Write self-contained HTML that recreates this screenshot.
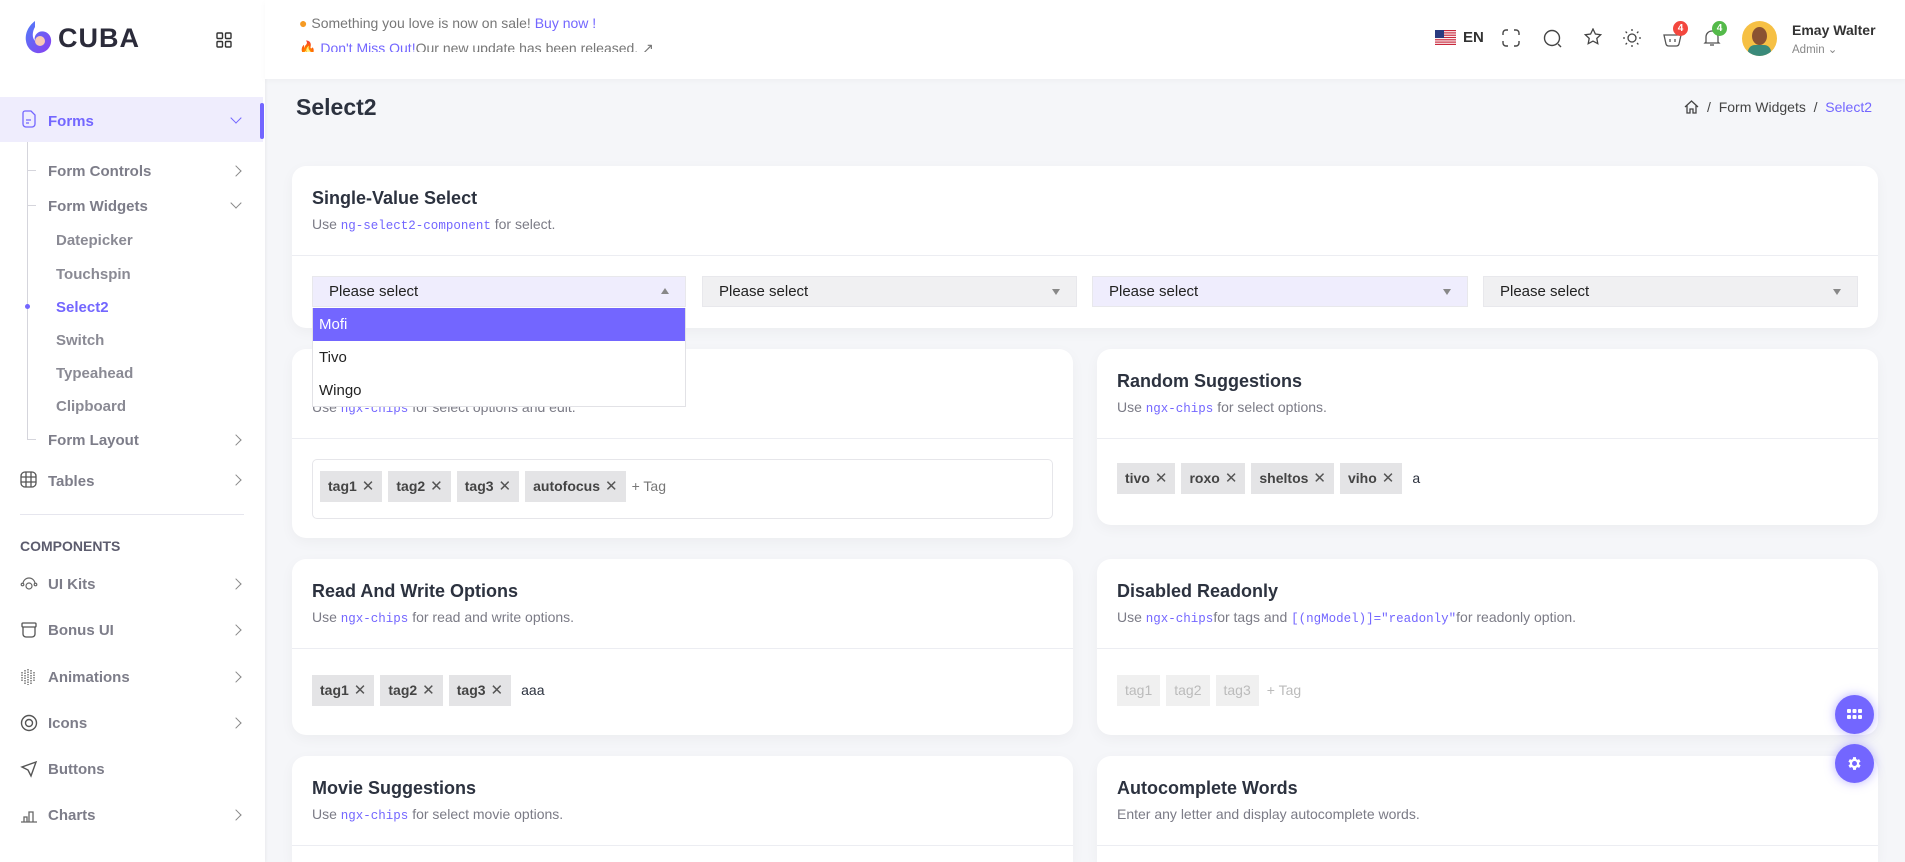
<!DOCTYPE html>
<html style="overflow:hidden;width:1905px;height:862px"><head><meta charset="utf-8"><style>
*{box-sizing:border-box;margin:0;padding:0}
body{width:1905px;height:862px;overflow:hidden;background:#f5f6f9;font-family:"Liberation Sans",sans-serif;position:relative;color:#2c323f}
.abs{position:absolute}
#side{left:0;top:0;width:265px;height:862px;background:#fff;box-shadow:1px 0 3px rgba(0,0,0,.05)}
#head{left:265px;top:0;width:1640px;height:79px;background:#fff;box-shadow:0 2px 6px rgba(0,0,0,.03)}
.nav{position:absolute;left:48px;font-size:15px;font-weight:bold;color:#7d7d89}
.sub{position:absolute;left:56px;font-size:15px;font-weight:bold;color:#8a8a94}
.chev{position:absolute;left:232px;width:8px;height:8px;border-right:1.6px solid #888;border-bottom:1.6px solid #888}
.r{transform:rotate(-45deg)}.d{transform:rotate(45deg)}
.ic{position:absolute;left:20px}
.card{position:absolute;background:#fff;border-radius:14px;box-shadow:0 4px 14px rgba(0,0,0,.04);overflow:hidden}
.card h5{position:absolute;left:20px;top:22px;font-size:18px;font-weight:bold;color:#2c323f}
.card p{position:absolute;left:20px;top:50px;font-size:14px;color:#7b7b86;white-space:nowrap}
code{font-family:"Liberation Mono",monospace;font-size:12.5px;color:#7366ff}
.hr{position:absolute;left:0;right:0;height:1px;background:#ecedf2}
.sel{position:absolute;top:276px;height:31px;background:#f0f0f2;border:1px solid #e8e8ec;font-size:15px;padding:6px 16px;color:#222}
.sel i{position:absolute;right:16px;top:12px;border:4.5px solid transparent;border-top:6px solid #888;border-bottom:0}
.tag{display:inline-block;background:#e4e4e6;height:31px;line-height:31px;padding:0 8px;font-size:14px;font-weight:bold;color:#444;margin-right:6px;vertical-align:top}
.tag b{font-weight:normal;color:#555;margin-left:5px;font-size:15px}
.tags{position:absolute;left:20px}
.dis .tag{color:#bbb;background:#f0f0f0;font-weight:normal}
</style></head><body>
<div id="side" class="abs">
 <svg class="abs" style="left:23px;top:19px" width="30" height="36" viewBox="0 0 30 36"><defs><linearGradient id="g" x1="0" y1="0" x2="1" y2="1"><stop offset="0" stop-color="#4f7df9"/><stop offset="1" stop-color="#8a3ff0"/></linearGradient></defs><path d="M12 2C4 8 2 16 3 22c1 8 8 13 14 12 8-1 12-8 11-14-1-6-7-9-12-7-4 2-5 6-4 9-3-3-3-9 0-14z" fill="url(#g)"/><circle cx="17" cy="22" r="5" fill="#f9c9b6"/></svg>
 <div class="abs" style="left:58px;top:23px;font-size:27px;font-weight:bold;color:#2b2b3a;letter-spacing:1px">CUBA</div>
 <svg class="abs" style="left:216px;top:32px" width="16" height="16" viewBox="0 0 16 16" fill="none" stroke="#333" stroke-width="1.4"><rect x="1" y="1" width="5.5" height="5.5" rx="1"/><rect x="9.5" y="1" width="5.5" height="5.5" rx="1"/><rect x="1" y="9.5" width="5.5" height="5.5" rx="1"/><rect x="9.5" y="9.5" width="5.5" height="5.5" rx="1"/></svg>
 <div class="abs" style="left:0;top:97px;width:263px;height:45px;background:#efedfd"></div>
 <div class="abs" style="left:260px;top:103px;width:4px;height:36px;background:#7366ff;border-radius:2px"></div>
 <svg class="ic" style="top:110px" width="18" height="18" viewBox="0 0 18 18" fill="none" stroke="#7366ff" stroke-width="1.3"><path d="M3 3a2 2 0 0 1 2-2h6l4 4v9a3 3 0 0 1-3 3H6a3 3 0 0 1-3-3z"/><path d="M6 10h5M6 13h3"/></svg>
 <div class="nav" style="top:113px;color:#7366ff">Forms</div>
 <div class="chev d" style="top:114px;border-color:#7366ff"></div>
 <div class="abs" style="left:27px;top:142px;width:1px;height:297px;background:#d5d5dc"></div>
 <div class="abs" style="left:27px;top:170px;width:9px;height:1px;background:#d5d5dc"></div>
 <div class="abs" style="left:27px;top:205px;width:9px;height:1px;background:#d5d5dc"></div>
 <div class="abs" style="left:27px;top:439px;width:9px;height:1px;background:#d5d5dc"></div>
 <div class="abs" style="left:25px;top:304px;width:5px;height:5px;border-radius:50%;background:#7366ff"></div>
 <div class="nav" style="top:163px">Form Controls</div><div class="chev r" style="top:167px"></div>
 <div class="nav" style="top:198px">Form Widgets</div><div class="chev d" style="top:199px"></div>
 <div class="sub" style="top:232px">Datepicker</div>
 <div class="sub" style="top:266px">Touchspin</div>
 <div class="sub" style="top:299px;color:#7366ff">Select2</div>
 <div class="sub" style="top:332px">Switch</div>
 <div class="sub" style="top:365px">Typeahead</div>
 <div class="sub" style="top:398px">Clipboard</div>
 <div class="nav" style="top:432px">Form Layout</div><div class="chev r" style="top:436px"></div>
 <svg class="ic" style="top:471px" width="18" height="18" viewBox="0 0 18 18" fill="none" stroke="#555" stroke-width="1.3"><rect x="1" y="1" width="15" height="15" rx="4"/><path d="M1 6h15M1 11h15M6 1v15M11 1v15"/></svg>
 <div class="nav" style="top:473px">Tables</div><div class="chev r" style="top:476px"></div>
 <div class="abs" style="left:20px;top:514px;width:224px;height:1px;background:#e6e6ee"></div>
 <div class="abs" style="left:20px;top:538px;font-size:14px;font-weight:bold;color:#5c5c6e">COMPONENTS</div>
 <svg class="ic" style="top:575px" width="18" height="18" viewBox="0 0 18 18" fill="none" stroke="#666" stroke-width="1.2"><path d="M3 9a6 6 0 0 1 12 0"/><circle cx="9" cy="11" r="3"/><circle cx="2.5" cy="9.5" r="1.3"/><circle cx="15.5" cy="9.5" r="1.3"/></svg>
 <div class="nav" style="top:576px">UI Kits</div><div class="chev r" style="top:580px"></div>
 <svg class="ic" style="top:621px" width="18" height="18" viewBox="0 0 18 18" fill="none" stroke="#555" stroke-width="1.3"><rect x="2" y="2" width="14" height="4" rx="1"/><path d="M3 6v7a3 3 0 0 0 3 3h6a3 3 0 0 0 3-3V6"/></svg>
 <div class="nav" style="top:622px">Bonus UI</div><div class="chev r" style="top:626px"></div>
 <svg class="ic" style="top:668px" width="18" height="18" viewBox="0 0 18 18" stroke="#777" stroke-width="1.5" stroke-dasharray="1.5 1"><path d="M2 4v10M5 2v14M8 1v16M11 2v14M14 4v10"/></svg>
 <div class="nav" style="top:669px">Animations</div><div class="chev r" style="top:673px"></div>
 <svg class="ic" style="top:714px" width="18" height="18" viewBox="0 0 18 18" fill="none" stroke="#555" stroke-width="1.4"><circle cx="9" cy="9" r="7.5"/><circle cx="9" cy="9" r="3.5"/></svg>
 <div class="nav" style="top:715px">Icons</div><div class="chev r" style="top:719px"></div>
 <svg class="ic" style="top:760px" width="18" height="18" viewBox="0 0 18 18" fill="none" stroke="#555" stroke-width="1.4"><path d="M16 2L2 7l6 3 3 6z"/></svg>
 <div class="nav" style="top:761px">Buttons</div>
 <svg class="ic" style="top:806px" width="18" height="18" viewBox="0 0 18 18" fill="none" stroke="#666" stroke-width="1.3"><path d="M1 16h16M4 16v-5h3v5M9 16V6h4v10"/></svg>
 <div class="nav" style="top:807px">Charts</div><div class="chev r" style="top:811px"></div>
</div>
<div id="head" class="abs">
 <div class="abs" style="left:34px;top:18px;width:460px;height:34px;overflow:hidden;font-size:14px;color:#777">
  <div style="position:absolute;top:-3px;left:0;white-space:nowrap"><span style="color:#f59a23">●</span> Something you love is now on sale! <span style="color:#7366ff">Buy now !</span></div>
  <div style="position:absolute;top:22px;left:0;white-space:nowrap"><span style="color:#f57a23">🔥</span> <span style="color:#7366ff">Don't Miss Out!</span>Our new update has been released. ↗</div>
 </div>
</div>
<svg class="abs" style="left:1435px;top:30px" width="21" height="15" viewBox="0 0 21 15"><rect width="21" height="15" fill="#fff"/><g fill="#c8283c"><rect y="0" width="21" height="1.2"/><rect y="2.3" width="21" height="1.2"/><rect y="4.6" width="21" height="1.2"/><rect y="6.9" width="21" height="1.2"/><rect y="9.2" width="21" height="1.2"/><rect y="11.5" width="21" height="1.2"/><rect y="13.8" width="21" height="1.2"/></g><rect width="9" height="8" fill="#2a3b80"/></svg>
<div class="abs" style="left:1463px;top:29px;font-size:15px;font-weight:bold;color:#333">EN</div>
<svg class="abs" style="left:1502px;top:29px" width="18" height="18" viewBox="0 0 18 18" fill="none" stroke="#444" stroke-width="1.4"><path d="M1 6V4a3 3 0 0 1 3-3h2M12 1h2a3 3 0 0 1 3 3v2M17 12v2a3 3 0 0 1-3 3h-2M6 17H4a3 3 0 0 1-3-3v-2"/></svg>
<svg class="abs" style="left:1543px;top:29px" width="20" height="20" viewBox="0 0 20 20" fill="none" stroke="#444" stroke-width="1.4"><circle cx="9" cy="9" r="7.5"/><path d="M15 15l3 3"/></svg>
<svg class="abs" style="left:1582px;top:28px" width="20" height="19" viewBox="0 0 20 19" fill="none" stroke="#444" stroke-width="1.3"><path d="M11 1l2.4 5 5.3.7-3.9 3.7 1 5.3-4.8-2.6-4.8 2.6 1-5.3L3.3 6.7 8.6 6z"/></svg>
<svg class="abs" style="left:1622px;top:28px" width="20" height="20" viewBox="0 0 20 20" fill="none" stroke="#444" stroke-width="1.3"><circle cx="10" cy="10" r="4"/><path d="M10 1v2M10 17v2M1 10h2M17 10h2M3.6 3.6l1.4 1.4M15 15l1.4 1.4M3.6 16.4L5 15M15 5l1.4-1.4"/></svg>
<svg class="abs" style="left:1663px;top:29px" width="19" height="18" viewBox="0 0 19 18" fill="none" stroke="#555" stroke-width="1.3"><path d="M1 6h17l-2 9a3 3 0 0 1-3 2H6a3 3 0 0 1-3-2z"/><path d="M7 10v3M12 10v3"/></svg>
<div class="abs" style="left:1673px;top:21px;width:15px;height:15px;border-radius:50%;background:#f3473e;color:#fff;font-size:10px;font-weight:bold;text-align:center;line-height:15px">4</div>
<svg class="abs" style="left:1703px;top:29px" width="18" height="18" viewBox="0 0 18 18" fill="none" stroke="#555" stroke-width="1.3"><path d="M3 13V8a6 6 0 0 1 12 0v5l1 1H2z"/><path d="M7 16h4"/></svg>
<div class="abs" style="left:1712px;top:21px;width:15px;height:15px;border-radius:50%;background:#54ba4a;color:#fff;font-size:10px;font-weight:bold;text-align:center;line-height:15px">4</div>
<div class="abs" style="left:1742px;top:21px;width:35px;height:35px;border-radius:50%;background:#f6c044;overflow:hidden"><div style="position:absolute;left:10px;top:6px;width:15px;height:18px;border-radius:50%;background:#8a5232"></div><div style="position:absolute;left:6px;top:24px;width:23px;height:14px;border-radius:8px;background:#3a8a7a"></div></div>
<div class="abs" style="left:1792px;top:22px;font-size:14px;font-weight:bold;color:#333">Emay Walter</div>
<div class="abs" style="left:1792px;top:42px;font-size:11.5px;color:#888">Admin ⌄</div>
<div class="abs" style="left:296px;top:94px;font-size:23px;font-weight:bold;color:#2c323f">Select2</div>
<div class="abs" style="right:33px;top:99px;font-size:14px;color:#444;white-space:nowrap"><svg width="15" height="14" viewBox="0 0 15 14" fill="none" stroke="#444" stroke-width="1.3" style="vertical-align:-2px"><path d="M1 7l6.5-6 6.5 6M3 5.5V13h3V9h3v4h3V5.5"/></svg>&nbsp; /&nbsp; Form Widgets &nbsp;/&nbsp; <span style="color:#7366ff">Select2</span></div>
<div class="card" style="left:292px;top:166px;width:1586px;height:162px">
 <h5>Single-Value Select</h5>
 <p>Use <code>ng-select2-component</code> for select.</p>
 <div class="hr" style="top:89px"></div>
</div>
<div class="sel" style="left:312px;width:374px;background:#efedfd"><span>Please select</span><i style="border-top:0;border-bottom:6px solid #888;top:11px"></i></div>
<div class="sel" style="left:702px;width:375px">Please select<i></i></div>
<div class="sel" style="left:1092px;width:376px;background:#efedfd">Please select<i></i></div>
<div class="sel" style="left:1483px;width:375px">Please select<i></i></div>
<div class="card" style="left:292px;top:349px;width:781px;height:189px">
 <p style="top:50px">Use <code>ngx-chips</code> for select options and edit.</p>
 <div class="hr" style="top:89px"></div>
 <div style="position:absolute;left:20px;top:110px;width:741px;height:60px;border:1px solid #e6e6ea;border-radius:5px"></div>
 <div class="tags" style="top:122px;left:28px"><span class="tag">tag1<b>✕</b></span><span class="tag">tag2<b>✕</b></span><span class="tag">tag3<b>✕</b></span><span class="tag">autofocus<b>✕</b></span><span style="font-size:14px;color:#777;line-height:31px">+ Tag</span></div>
</div>
<div class="abs" style="left:312px;top:308px;width:374px;height:99px;background:#fff;border:1px solid #e2e2e6;border-top:0;font-size:15px;color:#222">
 <div style="height:33px;background:#7366ff;color:#fff;padding:8px 6px">Mofi</div>
 <div style="height:33px;padding:8px 6px">Tivo</div>
 <div style="height:33px;padding:8px 6px">Wingo</div>
</div>
<div class="card" style="left:1097px;top:349px;width:781px;height:176px">
 <h5>Random Suggestions</h5>
 <p>Use <code>ngx-chips</code> for select options.</p>
 <div class="hr" style="top:89px"></div>
 <div class="tags" style="top:114px"><span class="tag">tivo<b>✕</b></span><span class="tag">roxo<b>✕</b></span><span class="tag">sheltos<b>✕</b></span><span class="tag">viho<b>✕</b></span><span style="font-size:14px;line-height:31px;margin-left:4px">a</span></div>
</div>
<div class="card" style="left:292px;top:559px;width:781px;height:176px">
 <h5>Read And Write Options</h5>
 <p>Use <code>ngx-chips</code> for read and write options.</p>
 <div class="hr" style="top:89px"></div>
 <div class="tags" style="top:116px"><span class="tag">tag1<b>✕</b></span><span class="tag">tag2<b>✕</b></span><span class="tag">tag3<b>✕</b></span><span style="font-size:14px;line-height:31px;margin-left:4px">aaa</span></div>
</div>
<div class="card dis" style="left:1097px;top:559px;width:781px;height:176px">
 <h5>Disabled Readonly</h5>
 <p>Use <code>ngx-chips</code>for tags and <code>[(ngModel)]="readonly"</code>for readonly option.</p>
 <div class="hr" style="top:89px"></div>
 <div class="tags" style="top:116px"><span class="tag">tag1</span><span class="tag">tag2</span><span class="tag">tag3</span><span style="font-size:14px;line-height:31px;color:#bbb;margin-left:2px">+ Tag</span></div>
</div>
<div class="card" style="left:292px;top:756px;width:781px;height:106px;border-radius:14px 14px 0 0">
 <h5>Movie Suggestions</h5>
 <p>Use <code>ngx-chips</code> for select movie options.</p>
 <div class="hr" style="top:89px"></div>
</div>
<div class="card" style="left:1097px;top:756px;width:781px;height:106px;border-radius:14px 14px 0 0">
 <h5>Autocomplete Words</h5>
 <p>Enter any letter and display autocomplete words.</p>
 <div class="hr" style="top:89px"></div>
</div>
<div class="abs" style="left:1835px;top:695px;width:39px;height:39px;border-radius:50%;background:#7366ff;box-shadow:0 0 10px rgba(115,102,255,.5)"><svg style="position:absolute;left:12px;top:14px" width="15" height="11" viewBox="0 0 15 11" fill="#fff"><rect x="0" y="0" width="4" height="4" rx="1"/><rect x="5.5" y="0" width="4" height="4" rx="1"/><rect x="11" y="0" width="4" height="4" rx="1"/><rect x="0" y="6" width="4" height="4" rx="1"/><rect x="5.5" y="6" width="4" height="4" rx="1"/><rect x="11" y="6" width="4" height="4" rx="1"/></svg></div>
<div class="abs" style="left:1835px;top:744px;width:39px;height:39px;border-radius:50%;background:#7366ff;box-shadow:0 0 10px rgba(115,102,255,.5)"><svg style="position:absolute;left:11px;top:11px" width="17" height="17" viewBox="0 0 24 24"><path fill="#fff" d="M19.4 13a7.5 7.5 0 0 0 0-2l2.1-1.6-2-3.5-2.5 1a7 7 0 0 0-1.7-1L15 3h-4l-.4 2.9a7 7 0 0 0-1.7 1l-2.5-1-2 3.5L6.6 11a7.5 7.5 0 0 0 0 2l-2.1 1.6 2 3.5 2.5-1a7 7 0 0 0 1.7 1L11 21h4l.4-2.9a7 7 0 0 0 1.7-1l2.5 1 2-3.5zM13 15.5a3.5 3.5 0 1 1 0-7 3.5 3.5 0 0 1 0 7z" transform="translate(-1 0)"/></svg></div>
</body></html>
